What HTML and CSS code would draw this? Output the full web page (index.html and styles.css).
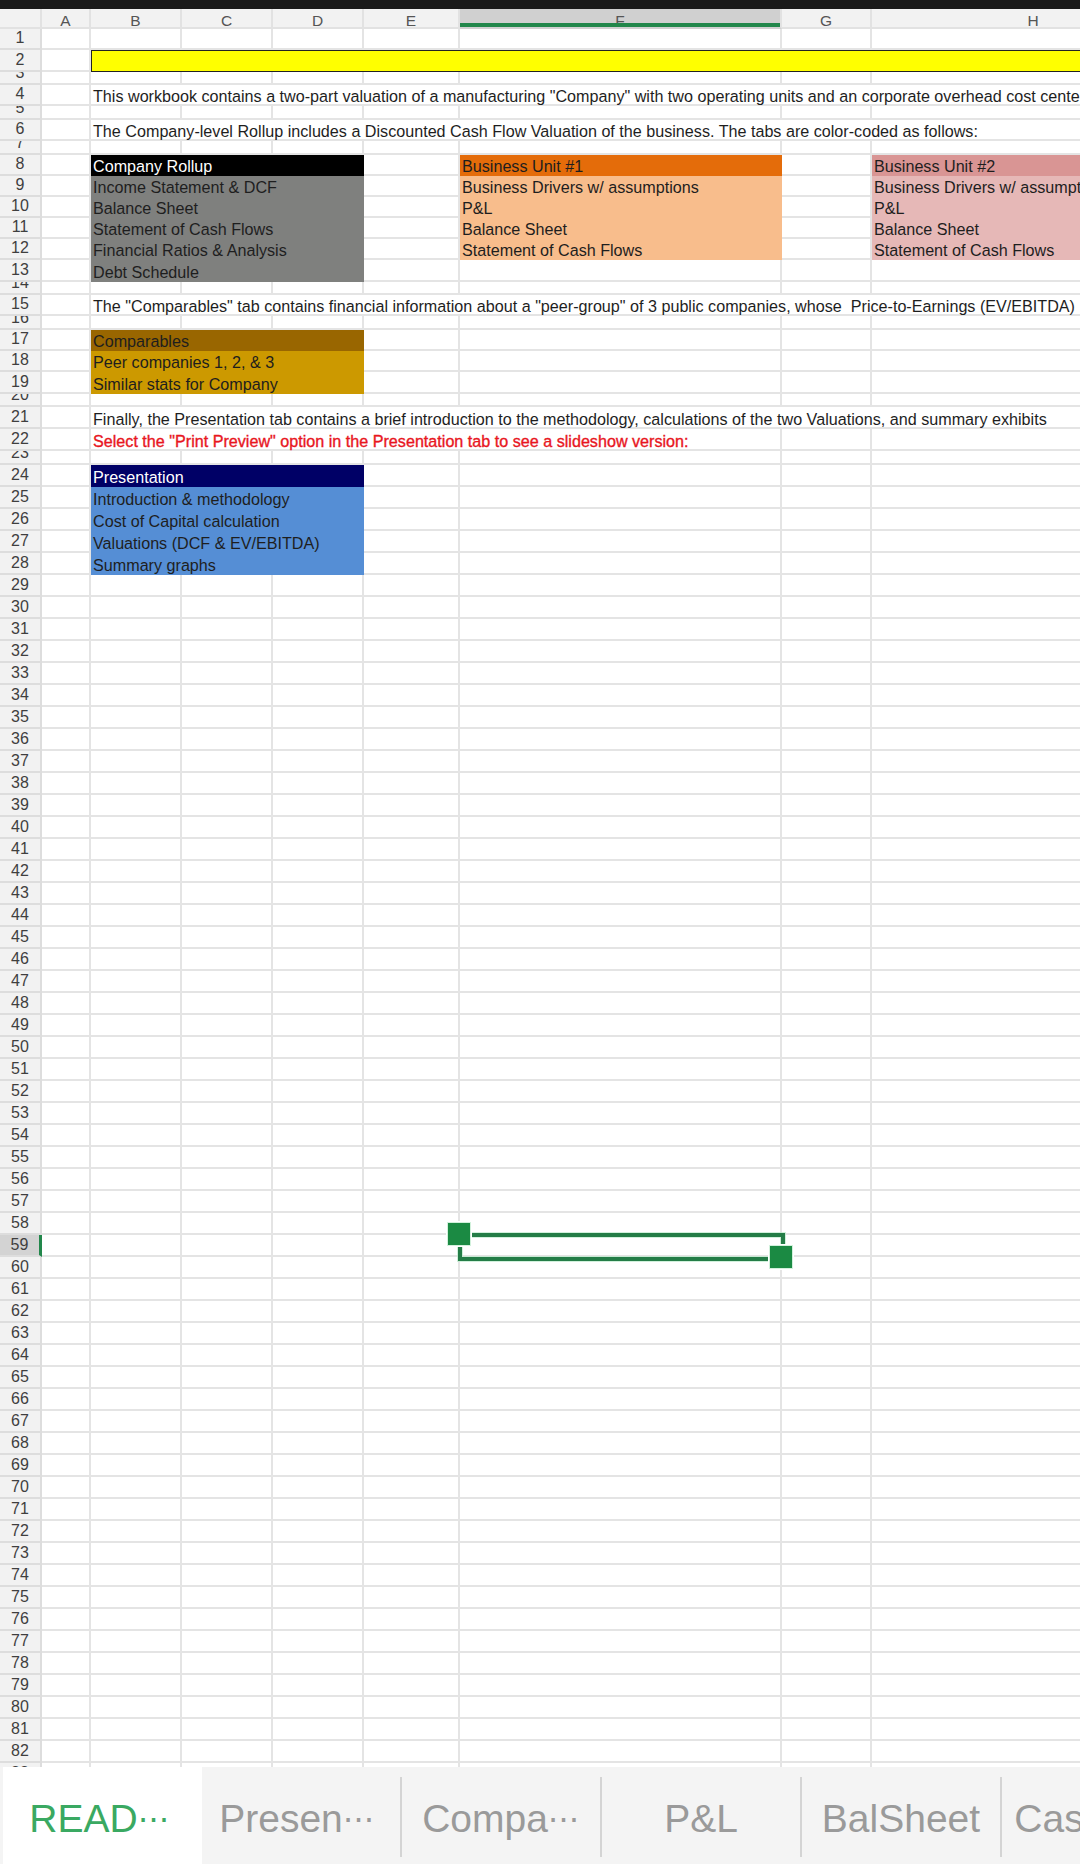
FILE: index.html
```html
<!DOCTYPE html>
<html lang="en">
<head>
<meta charset="utf-8">
<title>README</title>
<link rel="stylesheet" href="styles.css">
</head>
<body>
<div class="topbar"></div>
<div class="sheet">
  <div class="row hdr">
    <span class="ch corner"></span><span class="ch">A</span><span class="ch">B</span><span class="ch">C</span><span class="ch">D</span><span class="ch">E</span><span class="ch cursel">F</span><span class="ch">G</span><span class="ch">H</span>
  </div>
  <div class="row h21"><span class="rh">1</span><i></i><i></i><i></i><i></i><i></i><i></i><i></i><i></i></div>
  <div class="row"><span class="rh">2</span><i></i><span class="title-bar"></span></div>
  <div class="row h13"><span class="rh">3</span><i></i><i></i><i></i><i></i><i></i><i></i><i></i><i></i></div>
  <div class="row h21"><span class="rh">4</span><i></i><span class="txt wide">This workbook contains a two-part valuation of a manufacturing "Company" with two operating units and an corporate overhead cost center.</span></div>
  <div class="row h14"><span class="rh">5</span><i></i><i></i><i></i><i></i><i></i><i></i><i></i><i></i></div>
  <div class="row h21"><span class="rh">6</span><i></i><span class="txt wide">The Company-level Rollup includes a Discounted Cash Flow Valuation of the business. The tabs are color-coded as follows:</span></div>
  <div class="row h14"><span class="rh">7</span><i></i><i></i><i></i><i></i><i></i><i></i><i></i><i></i></div>
  <div class="row h21"><span class="rh">8</span><i></i><span class="txt blk3 k-black">Company Rollup</span><i></i><span class="txt k-orange">Business Unit #1</span><i></i><span class="txt k-rose">Business Unit #2</span></div>
  <div class="row h21"><span class="rh">9</span><i></i><span class="txt blk3 k-gray">Income Statement &amp; DCF</span><i></i><span class="txt k-peach">Business Drivers w/ assumptions</span><i></i><span class="txt k-pink">Business Drivers w/ assumptions</span></div>
  <div class="row h21"><span class="rh">10</span><i></i><span class="txt blk3 k-gray">Balance Sheet</span><i></i><span class="txt k-peach">P&amp;L</span><i></i><span class="txt k-pink">P&amp;L</span></div>
  <div class="row h21"><span class="rh">11</span><i></i><span class="txt blk3 k-gray">Statement of Cash Flows</span><i></i><span class="txt k-peach">Balance Sheet</span><i></i><span class="txt k-pink">Balance Sheet</span></div>
  <div class="row h21"><span class="rh">12</span><i></i><span class="txt blk3 k-gray">Financial Ratios &amp; Analysis</span><i></i><span class="txt k-peach">Statement of Cash Flows</span><i></i><span class="txt k-pink">Statement of Cash Flows</span></div>
  <div class="row"><span class="rh">13</span><i></i><span class="txt blk3 k-gray">Debt Schedule</span><i></i><i></i><i></i><i></i></div>
  <div class="row h13"><span class="rh">14</span><i></i><i></i><i></i><i></i><i></i><i></i><i></i><i></i></div>
  <div class="row h21"><span class="rh">15</span><i></i><span class="txt wide">The "Comparables" tab contains financial information about a "peer-group" of 3 public companies, whose&nbsp; Price-to-Earnings (EV/EBITDA)</span></div>
  <div class="row h14"><span class="rh">16</span><i></i><i></i><i></i><i></i><i></i><i></i><i></i><i></i></div>
  <div class="row h21"><span class="rh">17</span><i></i><span class="txt blk3 k-brown">Comparables</span><i></i><i></i><i></i><i></i></div>
  <div class="row h21"><span class="rh">18</span><i></i><span class="txt blk3 k-gold">Peer companies 1, 2, &amp; 3</span><i></i><i></i><i></i><i></i></div>
  <div class="row"><span class="rh">19</span><i></i><span class="txt blk3 k-gold">Similar stats for Company</span><i></i><i></i><i></i><i></i></div>
  <div class="row h13"><span class="rh">20</span><i></i><i></i><i></i><i></i><i></i><i></i><i></i><i></i></div>
  <div class="row"><span class="rh">21</span><i></i><span class="txt wide">Finally, the Presentation tab contains a brief introduction to the methodology, calculations of the two Valuations, and summary exhibits</span></div>
  <div class="row"><span class="rh">22</span><i></i><span class="txt blk5 red">Select the "Print Preview" option in the Presentation tab to see a slideshow version:</span><i></i><i></i></div>
  <div class="row h14"><span class="rh">23</span><i></i><i></i><i></i><i></i><i></i><i></i><i></i><i></i></div>
  <div class="row"><span class="rh">24</span><i></i><span class="txt blk3 k-navy">Presentation</span><i></i><i></i><i></i><i></i></div>
  <div class="row"><span class="rh">25</span><i></i><span class="txt blk3 k-blue">Introduction &amp; methodology</span><i></i><i></i><i></i><i></i></div>
  <div class="row"><span class="rh">26</span><i></i><span class="txt blk3 k-blue">Cost of Capital calculation</span><i></i><i></i><i></i><i></i></div>
  <div class="row"><span class="rh">27</span><i></i><span class="txt blk3 k-blue">Valuations (DCF &amp; EV/EBITDA)</span><i></i><i></i><i></i><i></i></div>
  <div class="row"><span class="rh">28</span><i></i><span class="txt blk3 k-blue">Summary graphs</span><i></i><i></i><i></i><i></i></div>
  <div class="row"><span class="rh">29</span><i></i><i></i><i></i><i></i><i></i><i></i><i></i><i></i></div>
  <div class="row"><span class="rh">30</span><i></i><i></i><i></i><i></i><i></i><i></i><i></i><i></i></div>
  <div class="row"><span class="rh">31</span><i></i><i></i><i></i><i></i><i></i><i></i><i></i><i></i></div>
  <div class="row"><span class="rh">32</span><i></i><i></i><i></i><i></i><i></i><i></i><i></i><i></i></div>
  <div class="row"><span class="rh">33</span><i></i><i></i><i></i><i></i><i></i><i></i><i></i><i></i></div>
  <div class="row"><span class="rh">34</span><i></i><i></i><i></i><i></i><i></i><i></i><i></i><i></i></div>
  <div class="row"><span class="rh">35</span><i></i><i></i><i></i><i></i><i></i><i></i><i></i><i></i></div>
  <div class="row"><span class="rh">36</span><i></i><i></i><i></i><i></i><i></i><i></i><i></i><i></i></div>
  <div class="row"><span class="rh">37</span><i></i><i></i><i></i><i></i><i></i><i></i><i></i><i></i></div>
  <div class="row"><span class="rh">38</span><i></i><i></i><i></i><i></i><i></i><i></i><i></i><i></i></div>
  <div class="row"><span class="rh">39</span><i></i><i></i><i></i><i></i><i></i><i></i><i></i><i></i></div>
  <div class="row"><span class="rh">40</span><i></i><i></i><i></i><i></i><i></i><i></i><i></i><i></i></div>
  <div class="row"><span class="rh">41</span><i></i><i></i><i></i><i></i><i></i><i></i><i></i><i></i></div>
  <div class="row"><span class="rh">42</span><i></i><i></i><i></i><i></i><i></i><i></i><i></i><i></i></div>
  <div class="row"><span class="rh">43</span><i></i><i></i><i></i><i></i><i></i><i></i><i></i><i></i></div>
  <div class="row"><span class="rh">44</span><i></i><i></i><i></i><i></i><i></i><i></i><i></i><i></i></div>
  <div class="row"><span class="rh">45</span><i></i><i></i><i></i><i></i><i></i><i></i><i></i><i></i></div>
  <div class="row"><span class="rh">46</span><i></i><i></i><i></i><i></i><i></i><i></i><i></i><i></i></div>
  <div class="row"><span class="rh">47</span><i></i><i></i><i></i><i></i><i></i><i></i><i></i><i></i></div>
  <div class="row"><span class="rh">48</span><i></i><i></i><i></i><i></i><i></i><i></i><i></i><i></i></div>
  <div class="row"><span class="rh">49</span><i></i><i></i><i></i><i></i><i></i><i></i><i></i><i></i></div>
  <div class="row"><span class="rh">50</span><i></i><i></i><i></i><i></i><i></i><i></i><i></i><i></i></div>
  <div class="row"><span class="rh">51</span><i></i><i></i><i></i><i></i><i></i><i></i><i></i><i></i></div>
  <div class="row"><span class="rh">52</span><i></i><i></i><i></i><i></i><i></i><i></i><i></i><i></i></div>
  <div class="row"><span class="rh">53</span><i></i><i></i><i></i><i></i><i></i><i></i><i></i><i></i></div>
  <div class="row"><span class="rh">54</span><i></i><i></i><i></i><i></i><i></i><i></i><i></i><i></i></div>
  <div class="row"><span class="rh">55</span><i></i><i></i><i></i><i></i><i></i><i></i><i></i><i></i></div>
  <div class="row"><span class="rh">56</span><i></i><i></i><i></i><i></i><i></i><i></i><i></i><i></i></div>
  <div class="row"><span class="rh">57</span><i></i><i></i><i></i><i></i><i></i><i></i><i></i><i></i></div>
  <div class="row"><span class="rh">58</span><i></i><i></i><i></i><i></i><i></i><i></i><i></i><i></i></div>
  <div class="row"><span class="rh cur">59</span><i></i><i></i><i></i><i></i><i></i><i class="selcell"><span class="sel"></span><span class="hd tl"></span><span class="hd br"></span></i><i></i><i></i></div>
  <div class="row"><span class="rh">60</span><i></i><i></i><i></i><i></i><i></i><i></i><i></i><i></i></div>
  <div class="row"><span class="rh">61</span><i></i><i></i><i></i><i></i><i></i><i></i><i></i><i></i></div>
  <div class="row"><span class="rh">62</span><i></i><i></i><i></i><i></i><i></i><i></i><i></i><i></i></div>
  <div class="row"><span class="rh">63</span><i></i><i></i><i></i><i></i><i></i><i></i><i></i><i></i></div>
  <div class="row"><span class="rh">64</span><i></i><i></i><i></i><i></i><i></i><i></i><i></i><i></i></div>
  <div class="row"><span class="rh">65</span><i></i><i></i><i></i><i></i><i></i><i></i><i></i><i></i></div>
  <div class="row"><span class="rh">66</span><i></i><i></i><i></i><i></i><i></i><i></i><i></i><i></i></div>
  <div class="row"><span class="rh">67</span><i></i><i></i><i></i><i></i><i></i><i></i><i></i><i></i></div>
  <div class="row"><span class="rh">68</span><i></i><i></i><i></i><i></i><i></i><i></i><i></i><i></i></div>
  <div class="row"><span class="rh">69</span><i></i><i></i><i></i><i></i><i></i><i></i><i></i><i></i></div>
  <div class="row"><span class="rh">70</span><i></i><i></i><i></i><i></i><i></i><i></i><i></i><i></i></div>
  <div class="row"><span class="rh">71</span><i></i><i></i><i></i><i></i><i></i><i></i><i></i><i></i></div>
  <div class="row"><span class="rh">72</span><i></i><i></i><i></i><i></i><i></i><i></i><i></i><i></i></div>
  <div class="row"><span class="rh">73</span><i></i><i></i><i></i><i></i><i></i><i></i><i></i><i></i></div>
  <div class="row"><span class="rh">74</span><i></i><i></i><i></i><i></i><i></i><i></i><i></i><i></i></div>
  <div class="row"><span class="rh">75</span><i></i><i></i><i></i><i></i><i></i><i></i><i></i><i></i></div>
  <div class="row"><span class="rh">76</span><i></i><i></i><i></i><i></i><i></i><i></i><i></i><i></i></div>
  <div class="row"><span class="rh">77</span><i></i><i></i><i></i><i></i><i></i><i></i><i></i><i></i></div>
  <div class="row"><span class="rh">78</span><i></i><i></i><i></i><i></i><i></i><i></i><i></i><i></i></div>
  <div class="row"><span class="rh">79</span><i></i><i></i><i></i><i></i><i></i><i></i><i></i><i></i></div>
  <div class="row"><span class="rh">80</span><i></i><i></i><i></i><i></i><i></i><i></i><i></i><i></i></div>
  <div class="row"><span class="rh">81</span><i></i><i></i><i></i><i></i><i></i><i></i><i></i><i></i></div>
  <div class="row"><span class="rh">82</span><i></i><i></i><i></i><i></i><i></i><i></i><i></i><i></i></div>
  <div class="row"><span class="rh">83</span><i></i><i></i><i></i><i></i><i></i><i></i><i></i><i></i></div>
</div>
<nav class="tabs">
  <div class="tab on">READ<span class="dots">⋯</span></div>
  <div class="tab">Presen<span class="dots">⋯</span></div>
  <span class="divider"></span>
  <div class="tab">Compa<span class="dots">⋯</span></div>
  <span class="divider"></span>
  <div class="tab">P&amp;L</div>
  <span class="divider"></span>
  <div class="tab">BalSheet</div>
  <span class="divider"></span>
  <div class="tab">CashFlow</div>
</nav>
</body>
</html>
```

FILE: styles.css
```css
* {
  box-sizing: border-box;
  margin: 0;
  padding: 0;
}

html,
body {
  width: 1080px;
  height: 1864px;
  overflow: hidden;
  background: #ffffff;
}

body {
  font-family: "Liberation Sans", Arial, "DejaVu Sans", sans-serif;
  color: #1e1e1e;
}

.topbar {
  height: 9px;
  background: #1a1a1a;
}

.sheet {
  height: 1758px;
  overflow: hidden;
}

.row {
  display: grid;
  grid-template-columns: 42px 49px 91px 91px 91px 96px 322px 90px 324px;
  width: 1196px;
  height: 22px;
}

.hdr { height: 20px; }
.h21 { height: 21px; }
.h14 { height: 14px; }
.h13 { height: 13px; }

.row > i {
  display: block;
  border-right: 2px solid #e4e4e4;
  border-bottom: 2px solid #e4e4e4;
}

/* column header */
.ch {
  background: #f2f2f2;
  border-right: 2px solid #e2e2e2;
  border-bottom: 2px solid #e2e2e2;
  display: flex;
  align-items: flex-end;
  justify-content: center;
  font-size: 15.5px;
  line-height: 13px;
  color: #555555;
  overflow: hidden;
}

.ch.cursel {
  position: relative;
  background: #d0d0d0;
  border-bottom-color: #d0d0d0;
}

.ch.cursel::after {
  content: "";
  position: absolute;
  left: 0;
  right: -2px;
  bottom: 0;
  height: 4px;
  background: #22874b;
}

/* row header */
.rh {
  background: #f2f2f2;
  border-right: 2px solid #dddddd;
  border-bottom: 2px solid #dddddd;
  display: flex;
  align-items: flex-end;
  justify-content: center;
  overflow: hidden;
  font-size: 16px;
  line-height: 20px;
  color: #3f3f3f;
}

.rh.cur {
  background: #d3d3d3;
  border-right: 3px solid #22874b;
}

/* cell text */
.txt {
  display: flex;
  align-items: flex-end;
  padding-left: 2px;
  font-size: 16.15px;
  line-height: 15px;
  white-space: nowrap;
  border-bottom: 2px solid #e4e4e4;
  border-right: 2px solid #e4e4e4;
  color: #1e1e1e;
}

.wide { grid-column: 3 / -1; }
.blk3 { grid-column: 3 / span 3; }
.blk5 { grid-column: 3 / span 5; }

.red {
  color: #e8161e;
  -webkit-text-stroke: 0.35px #e8161e;
}

.title-bar {
  grid-column: 3 / -1;
  background: #ffff00;
  border: 1.5px solid #222222;
}

.k-black,
.k-gray,
.k-orange,
.k-peach,
.k-rose,
.k-pink,
.k-brown,
.k-gold,
.k-navy,
.k-blue {
  border-color: transparent;
}

.k-black { background: #000000; color: #ffffff; }
.k-gray { background: #7f807e; }
.k-orange { background: #e46c0a; }
.k-peach { background: #f8bd8c; }
.k-rose { background: #d99594; }
.k-pink { background: #e6b8b7; }
.k-brown { background: #996600; }
.k-gold { background: #cc9900; }
.k-navy { background: #000066; color: #ffffff; }
.k-blue { background: #558ed5; }

/* selection */
.row > i.selcell {
  position: relative;
}

.sel {
  position: absolute;
  left: -2px;
  top: -2px;
  width: 327px;
  height: 28px;
  border: 4px solid #247d47;
  box-shadow: 0 0 0 1px rgba(190, 235, 205, 0.7), inset 0 0 0 1px rgba(190, 235, 205, 0.7);
  z-index: 2;
}

.hd {
  position: absolute;
  width: 24px;
  height: 24px;
  background: #1b8a43;
  border: 1px solid #d2f1dc;
  box-shadow: 0 0 0 1px #ffffff;
  z-index: 3;
}

.hd.tl { left: -13px; top: -13px; }
.hd.br { left: 309px; top: 10px; }

/* sheet tabs */
.tabs {
  display: flex;
  height: 97px;
  background: #f4f4f4;
  padding-left: 3px;
  white-space: nowrap;
}

.tab {
  flex: 0 0 198px;
  display: flex;
  align-items: center;
  justify-content: center;
  padding-top: 7px;
  font-size: 39px;
  color: #9a9a9a;
}

.tab.on {
  flex-basis: 199px;
  background: #ffffff;
  color: #3aa962;
  padding-right: 6px;
}

.tab.on + .tab {
  padding-right: 8px;
}

.dots {
  font-family: "DejaVu Sans", sans-serif;
  font-size: 32px;
}

.divider {
  flex: 0 0 2px;
  height: 80px;
  margin-top: 10px;
  background: #d4d4d4;
}
```
